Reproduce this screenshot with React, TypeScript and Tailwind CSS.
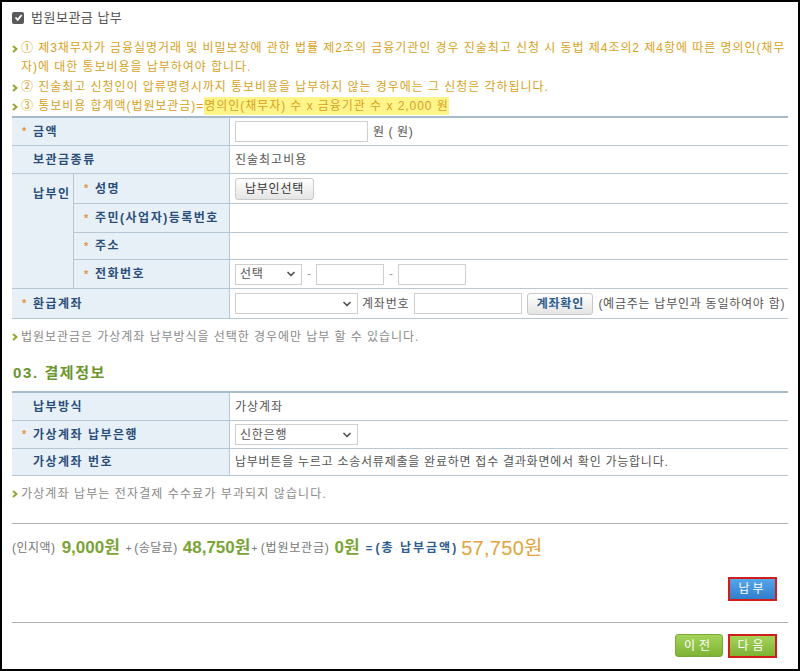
import React from "react";
import { ChevronDown } from "lucide-react";

const LABEL = "text-[12px] font-bold text-[#2b4e7a] tracking-[1.5px] whitespace-nowrap";
const LINE = "border-[#b7c8d4]";

function Bullet({ color = "#93a52c" }: { color?: string }) {
	return (
		<svg width="6" height="8" viewBox="0 0 6 8" className="shrink-0">
			<path d="M1 1 L4.5 4 L1 7" fill="none" stroke={color} strokeWidth="2" />
		</svg>
	);
}

function Star() {
	return <span className="w-[11px] text-[11px] font-bold text-[#e0963a]">*</span>;
}

function FakeSelect({ value, width }: { value: string; width: string }) {
	return (
		<div
			className={`${width} h-[21px] border border-[#cfcfcf] bg-white flex items-center justify-between pl-[4px] pr-[4px] text-[12px] text-[#555] tracking-[0.8px]`}
		>
			<span>{value}</span>
			<ChevronDown size={12} strokeWidth={3.5} className="text-[#555]" />
		</div>
	);
}

function Input({ width }: { width: string }) {
	return <div className={`${width} h-[21px] border border-[#cfcfcf] bg-white`} />;
}

function GrayButton({ children, width, blue }: { children: React.ReactNode; width: string; blue?: boolean }) {
	return (
		<div
			className={`${width} h-[22px] rounded-[3px] border border-[#c9c9c9] bg-gradient-to-b from-white to-[#e4e4e4] flex items-center justify-center text-[12px] tracking-[0.8px] ${
				blue ? "text-[#2d5b8c] font-bold" : "text-[#333]"
			}`}
		>
			{children}
		</div>
	);
}

function Row({
	label,
	star,
	h,
	labelW = "w-[218px]",
	children,
	last,
}: {
	label: string;
	star?: boolean;
	h: string;
	labelW?: string;
	children?: React.ReactNode;
	last?: boolean;
}) {
	return (
		<div className={`flex ${h} ${last ? "" : `border-b ${LINE}`}`}>
			<div className={`${labelW} shrink-0 bg-[#e8f0f7] border-r ${LINE} flex items-center pl-[10px]`}>
				{star ? <Star /> : <span className="w-[11px]" />}
				<span className={LABEL}>{label}</span>
			</div>
			<div className="flex-1 flex items-center gap-[5px] pl-[5px] text-[12px] text-[#555]">{children}</div>
		</div>
	);
}

export default function App() {
	return (
		<div className="w-[800px] h-[671px] border-2 border-black bg-white px-[10px] pt-[9px] font-['Liberation_Sans','Noto_Sans_CJK_KR',sans-serif] overflow-hidden">
			{/* checkbox header */}
			<div className="flex items-center h-[13px] gap-[7px]">
				<div className="w-[12px] h-[12px] rounded-[2px] bg-[#5a5a5a] flex items-center justify-center">
					<svg width="9" height="9" viewBox="0 0 9 9">
						<path d="M1.5 4.5 L3.7 6.8 L7.6 2" fill="none" stroke="white" strokeWidth="1.8" />
					</svg>
				</div>
				<span className="text-[13px] text-[#555] tracking-[0.5px]">법원보관금 납부</span>
			</div>

			{/* notes */}
			<div className="mt-[15px] text-[12px] text-[#d6a21c] leading-[19px] tracking-[0.95px]">
				<div className="flex items-start gap-[3px]">
					<div className="h-[19px] flex items-center">
						<Bullet />
					</div>
					<span className="whitespace-nowrap">
						① 제3채무자가 금융실명거래 및 비밀보장에 관한 법률 제2조의 금융기관인 경우 진술최고 신청 시 동법 제4조의2 제4항에 따른 명의인(채무
						<br />
						자)에 대한 통보비용을 납부하여야 합니다.
					</span>
				</div>
				<div className="flex items-center gap-[3px] mt-[1px]">
					<Bullet />
					<span className="whitespace-nowrap">② 진술최고 신청인이 압류명령시까지 통보비용을 납부하지 않는 경우에는 그 신청은 각하됩니다.</span>
				</div>
				<div className="flex items-center gap-[3px]">
					<Bullet />
					<span className="whitespace-nowrap">
						③ 통보비용 합계액(법원보관금)=
						<span className="bg-[#fff48a] py-[2px]">명의인(채무자) 수 x 금융기관 수 x 2,000 원</span>
					</span>
				</div>
			</div>

			{/* table 1 */}
			<div className={`mt-[0px] border-t-2 border-b ${LINE} border-t-[#a7bccb]`}>
				<Row label="금액" star h="h-[28px]">
					<Input width="w-[133px]" />
					<span className="tracking-[0.6px]">원 ( 원)</span>
				</Row>
				<Row label="보관금종류" h="h-[28px]">
					<span className="tracking-[1px]">진술최고비용</span>
				</Row>
				<div className={`flex border-b ${LINE}`}>
					<div className={`w-[62px] shrink-0 bg-[#e8f0f7] border-r ${LINE} pl-[21px] pt-[7px]`}>
						<span className={LABEL}>납부인</span>
					</div>
					<div className="flex-1">
						<Row label="성명" star h="h-[30px]" labelW="w-[156px]">
							<GrayButton width="w-[79px]">납부인선택</GrayButton>
						</Row>
						<Row label="주민(사업자)등록번호" star h="h-[29px]" labelW="w-[156px]" />
						<Row label="주소" star h="h-[27px]" labelW="w-[156px]" />
						<Row label="전화번호" star h="h-[28px]" labelW="w-[156px]" last>
							<FakeSelect value="선택" width="w-[67px]" />
							<span className="text-[#999]">-</span>
							<Input width="w-[68px]" />
							<span className="text-[#999]">-</span>
							<Input width="w-[68px]" />
						</Row>
					</div>
				</div>
				<Row label="환급계좌" star h="h-[29px]" last>
					<FakeSelect value="" width="w-[123px]" />
					<span className="tracking-[0.8px] -ml-[1px]">계좌번호</span>
					<Input width="w-[108px]" />
					<GrayButton width="w-[66px]" blue>
						계좌확인
					</GrayButton>
					<span className="tracking-[0.75px] whitespace-nowrap">(예금주는 납부인과 동일하여야 함)</span>
				</Row>
			</div>

			{/* note 2 */}
			<div className="mt-[8px] flex items-center gap-[3px] h-[19px] text-[12px] text-[#8a8a8a] tracking-[0.95px]">
				<Bullet />
				<span>법원보관금은 가상계좌 납부방식을 선택한 경우에만 납부 할 수 있습니다.</span>
			</div>

			{/* section title */}
			<div className="mt-[17px] h-[20px] flex items-center pl-[1px] text-[15px] font-bold text-[#6a962c] tracking-[1.6px]">
				03. 결제정보
			</div>

			{/* table 2 */}
			<div className={`mt-[8px] border-t-2 border-b ${LINE} border-t-[#a7bccb]`}>
				<Row label="납부방식" h="h-[28px]">
					<span className="tracking-[1px]">가상계좌</span>
				</Row>
				<Row label="가상계좌 납부은행" star h="h-[28px]">
					<FakeSelect value="신한은행" width="w-[123px]" />
				</Row>
				<Row label="가상계좌 번호" star={false} h="h-[26px]" last>
					<span className="tracking-[0.75px]">납부버튼을 누르고 소송서류제출을 완료하면 접수 결과화면에서 확인 가능합니다.</span>
				</Row>
			</div>

			{/* note 3 */}
			<div className="mt-[8px] flex items-center gap-[3px] h-[19px] text-[12px] text-[#8a8a8a] tracking-[1.1px]">
				<Bullet />
				<span>가상계좌 납부는 전자결제 수수료가 부과되지 않습니다.</span>
			</div>

			<div className="mt-[20px] border-t border-[#b0b0b0]" />

			{/* totals */}
			<div className="mt-[12px] h-[24px] flex items-center text-[12px] text-[#777] whitespace-nowrap tracking-[0.5px]">
				<span>(인지액)</span>
				<span className="ml-[6px] text-[17px] font-bold text-[#7aa436] tracking-[0px]">9,000원</span>
				<span className="ml-[6px] text-[10px]">+</span>
				<span className="ml-[2px]">(송달료)</span>
				<span className="ml-[5px] text-[17px] font-bold text-[#7aa436] tracking-[0px]">48,750원</span>
				<span className="ml-[1px] text-[10px]">+</span>
				<span className="ml-[3px] tracking-[0.8px]">(법원보관금)</span>
				<span className="ml-[5px] text-[17px] font-bold text-[#7aa436] tracking-[0px]">0원</span>
				<span className="ml-[6px] text-[11px] font-bold text-[#2d5b8c]">=</span>
				<span className="ml-[3px] font-bold text-[#2d5b8c] tracking-[2px]">(총 납부금액)</span>
				<span className="ml-[3px] text-[20px] text-[#e2a33c] tracking-[0.3px]">57,750원</span>
			</div>

			{/* pay button */}
			<div className="mt-[17px] flex justify-end pr-[11px]">
				<div className="w-[49px] h-[24px] border-2 border-[#d21d1d] bg-gradient-to-b from-[#56a6ea] to-[#2f7fcc] flex items-center justify-center text-[12px] text-white tracking-[3px]">
					납부
				</div>
			</div>

			<div className="mt-[21px] border-t border-[#b0b0b0]" />

			{/* nav buttons */}
			<div className="mt-[11px] flex justify-end gap-[5px] pr-[11px]">
				<div className="w-[48px] h-[23px] rounded-[3px] border border-[#7aa83a] bg-gradient-to-b from-[#a6d35a] to-[#7db332] flex items-center justify-center text-[12px] text-white tracking-[4px]">
					이전
				</div>
				<div className="w-[49px] h-[24px] border-2 border-[#d21d1d] bg-gradient-to-b from-[#a6d35a] to-[#7db332] flex items-center justify-center text-[12px] text-white tracking-[4px]">
					다음
				</div>
			</div>
		</div>
	);
}
